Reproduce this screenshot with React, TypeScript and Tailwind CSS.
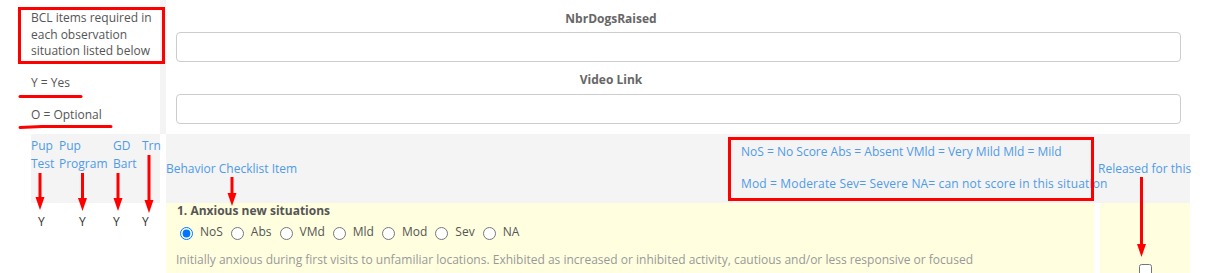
import React from "react";

const ratings = ["NoS", "Abs", "VMd", "Mld", "Mod", "Sev", "NA"];

const leftCols: { top: string; bottom?: string; w: string; pl: string }[] = [
  { top: "Pup", bottom: "Test", w: "w-[28px]", pl: "pl-[7px]" },
  { top: "Pup", bottom: "Program", w: "w-[54px]", pl: "pl-[20px]" },
  { top: "GD", bottom: "Bart", w: "w-[29px]", pl: "pl-0" },
  { top: "Trn", w: "w-[18px]", pl: "pl-0" },
];

// annotation arrows: x, start y, tip y
const arrows: [number, number, number][] = [
  [40, 173, 210],
  [82.5, 173, 211],
  [118, 173, 211],
  [149, 155, 213],
  [232, 177, 206],
  [1141.5, 177, 257],
];

function Annotations() {
  return (
    <svg className="pointer-events-none absolute left-0 top-0" width={1221} height={273} viewBox="0 0 1221 273">
      <rect x={19.5} y={8.5} width={144} height={54} fill="none" stroke="#f00" strokeWidth={3} />
      <rect x={729.5} y={138.5} width={363} height={61} fill="none" stroke="#f00" strokeWidth={3} />
      <line x1={20} y1={96.5} x2={81} y2={96.5} stroke="#f00" strokeWidth={3} strokeLinecap="round" />
      <path d="M20 127.5 L42 126.5 L111 126.5" fill="none" stroke="#f00" strokeWidth={3} strokeLinecap="round" />
      {arrows.map(([x, y1, y2], i) => (
        <g key={i}>
          <line x1={x} y1={y1} x2={x} y2={y2 - 11} stroke="#f00" strokeWidth={3} />
          <polygon points={`${x - 4.5},${y2 - 13} ${x + 4.5},${y2 - 13} ${x},${y2}`} fill="#f00" />
        </g>
      ))}
    </svg>
  );
}

export default function App() {
  return (
    <div className="relative h-[273px] w-[1221px] overflow-hidden bg-white font-['Open_Sans',sans-serif] text-[12px] text-[#555]">
      {/* top: legend + text fields */}
      <div className="flex h-[134px]">
        <div className="w-[160px] pl-[31px] pt-[10px] leading-[16.5px]">
          <p>BCL items required in each observation situation listed below</p>
          <p className="mt-[15px]">Y = Yes</p>
          <p className="mt-[16px]">O = Optional</p>
        </div>
        <div className="w-[6px] bg-[#f4f4f4]" />
        <div className="flex-1 pl-[10px] pr-[40px] pt-[10px]">
          <label className="block w-[870px] text-center font-bold leading-[18px] text-[#666]">NbrDogsRaised</label>
          <input className="mt-[4px] block h-[30px] w-full rounded-[4px] border border-[#ccc] bg-white" />
          <label className="mt-[9px] block w-[870px] text-center font-bold leading-[18px] text-[#666]">Video Link</label>
          <input className="mt-[5px] block h-[30px] w-full rounded-[4px] border border-[#ccc] bg-white" />
        </div>
      </div>

      {/* header band */}
      <div className="flex h-[69px] text-[#4f9be8]">
        <div className="w-[31px]" />
        <div className="flex w-[129px] bg-[#f4f4f4] pt-[3px] leading-[18px]">
          {leftCols.map((c, i) => (
            <div key={i} className={c.w}>
              <div>{c.top}</div>
              {c.bottom && <div>{c.bottom}</div>}
            </div>
          ))}
        </div>
        <div className="w-[6px]" />
        <div className="flex w-[1024px] items-center bg-[#f4f4f4]">
          <div className="w-[562px] whitespace-nowrap">Behavior Checklist Item</div>
          <div className="h-[64px] w-[366px] whitespace-nowrap pl-[13px] pt-[7px] leading-[16px]">
            <p>NoS = No Score Abs = Absent VMld = Very Mild Mld = Mild</p>
            <p className="mt-[16px] tracking-[0.15px]">Mod = Moderate Sev= Severe NA= can not score in this situation</p>
          </div>
          <div className="w-[96px] whitespace-nowrap pl-[4px]">Released for this</div>
        </div>
      </div>

      {/* first checklist row */}
      <div className="flex h-[70px]">
        <div className="w-[31px]" />
        <div className="flex w-[129px] pt-[10px] leading-[18px] text-[#333]">
          {leftCols.map((c, i) => (
            <div key={i} className={`${c.w} ${c.pl}`}>Y</div>
          ))}
        </div>
        <div className="w-[6px]" />
        <div className="w-[928px] bg-[#ffffe0] pl-[11px] leading-[16px]">
          <div className="font-bold">1. Anxious new situations</div>
          <div className="ml-[3px] mt-[8px] flex items-center gap-[8px]">
            {ratings.map((r, i) => (
              <label key={r} className="flex items-center">
                <input type="radio" name="q1" defaultChecked={i === 0} className="m-0 h-[13px] w-[13px]" />
                <span className="ml-[7px] -mt-[3px]">{r}</span>
              </label>
            ))}
          </div>
          <p className="-ml-[1px] mt-[12px] whitespace-nowrap text-[#999]">
            Initially anxious during first visits to unfamiliar locations. Exhibited as increased or inhibited activity, cautious and/or less responsive or focused
          </p>
        </div>
        <div className="w-[6px]" />
        <div className="w-[90px] bg-[#ffffe0] pl-[39px] pt-[61px]">
          <input type="checkbox" className="m-0 block h-[13px] w-[13px]" />
        </div>
      </div>

      <Annotations />
    </div>
  );
}
